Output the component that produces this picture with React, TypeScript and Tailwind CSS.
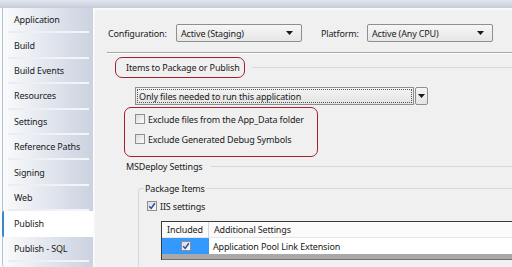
import React from "react"

// ─── Project properties: Package/Publish page ───

const font = { fontFamily: '"Noto Sans", "Open Sans", sans-serif' }

const tabs = [
  "Application",
  "Build",
  "Build Events",
  "Resources",
  "Settings",
  "Reference Paths",
  "Signing",
  "Web",
  "Publish",
  "Publish - SQL",
]

function Arrow() {
  return (
    <svg width="7" height="4" viewBox="0 0 7 4" className="shrink-0">
      <path d="M0 0 H7 L3.5 4 Z" fill="#1a1a1a" />
    </svg>
  )
}

function Check({ checked = false }: { checked?: boolean }) {
  return (
    <div className="w-[10px] h-[10px] shrink-0 border border-[#8f8f8f] bg-gradient-to-br from-[#dcdcdc] to-[#fbfbfb] flex items-center justify-center">
      {checked && (
        <svg width="8" height="8" viewBox="0 0 8 8">
          <path d="M1.2 4.2 L3.2 6.4 L6.8 1.2" fill="none" stroke="#2a4aa8" strokeWidth="1.5" />
        </svg>
      )}
    </div>
  )
}

function Select({ label, width }: { label: string; width: string }) {
  return (
    <div className={`${width} h-[18px] flex items-center justify-between pl-[4px] pr-[8px] border border-[#8e8f8f] rounded-[2px] bg-gradient-to-b from-[#f6f6f6] to-[#e6e6e6]`}>
      <span>{label}</span>
      <Arrow />
    </div>
  )
}

function SideBar() {
  return (
    <div className="w-[93px] shrink-0 pl-[2px] bg-gradient-to-r from-[#fbfcfd] to-[#cbd2e0]">
      <div className="h-full border-l border-[#b9bfcc] rounded-bl-[3px] flex flex-col">
        {tabs.map(t => {
          const active = t === "Publish"
          return (
            <div
              key={t}
              className={
                active
                  ? "h-[25.4px] shrink-0 flex items-center pl-[10px] bg-white border-l-2 border-[#3f86c7] rounded-l-[2px] -ml-px"
                  : "h-[25.4px] shrink-0 flex flex-col"
              }
            >
              {active ? (
                <span>{t}</span>
              ) : (
                <>
                  <div className="flex-1 flex items-center pl-[11px]">{t}</div>
                  <div className="h-[2px] ml-[5px] mr-[4px] bg-gradient-to-r from-[#e9ecf2] to-[#f4f6fa]" />
                </>
              )}
            </div>
          )
        })}
      </div>
    </div>
  )
}

function MainPanel() {
  return (
    <div className="flex-1 bg-[#f0f0f0] border-l-2 border-t-2 border-[#fafafa] flex flex-col overflow-hidden whitespace-nowrap">
      {/* configuration row */}
      <div className="flex items-center mt-[14px] ml-[13px] h-[18px]">
        <span className="w-[68px]">Configuration:</span>
        <Select label="Active (Staging)" width="w-[126px]" />
        <span className="ml-[19px] w-[46px]">Platform:</span>
        <Select label="Active (Any CPU)" width="w-[126px]" />
      </div>
      <div className="mt-[10px] ml-[12px] h-[2px] border-t border-[#a6a6a6] border-b border-b-white" />

      {/* items to package */}
      <div className="flex items-center mt-[3px] ml-[20px]">
        <div className="w-[130px] h-[21px] border-[1.5px] border-[#a31f34] rounded-[7px] flex items-center pl-[10px]">
          Items to Package or Publish
        </div>
        <div className="flex-1 ml-[7px] h-px bg-[#d0dae2]" />
      </div>

      <div className="flex mt-[9px] ml-[40px] h-[18px]">
        <div className="w-[279px] border border-[#8e8f8f] bg-gradient-to-b from-[#f4f4f4] to-[#e4e4e4] p-px">
          <div className="h-full border border-dotted border-[#555] flex items-center pl-[1px]">
            Only files needed to run this application
          </div>
        </div>
        <div className="w-[13px] ml-[1px] border border-[#8e8f8f] rounded-[2px] bg-gradient-to-b from-[#f4f4f4] to-[#e4e4e4] flex items-center justify-center">
          <Arrow />
        </div>
      </div>

      <div className="mt-[2px] ml-[29px] w-[194px] h-[50px] border-[1.5px] border-[#a31f34] rounded-[7px] flex flex-col gap-[6px] pt-[4px] pl-[10px]">
        <div className="h-[14px] flex items-center gap-[3px]">
          <Check />
          <span>Exclude files from the App_Data folder</span>
        </div>
        <div className="h-[14px] flex items-center gap-[3px]">
          <Check />
          <span>Exclude Generated Debug Symbols</span>
        </div>
      </div>

      {/* msdeploy */}
      <div className="flex items-center mt-[2px] ml-[31px] h-[14px]">
        <span>MSDeploy Settings</span>
        <div className="flex-1 ml-[8px] h-px bg-[#d0dae2]" />
      </div>

      <div className="mt-[15px] ml-[43px] flex-1 border-l border-t border-[#d0dae2] rounded-tl-[3px] flex flex-col">
        <div className="-mt-[8px] ml-[5px] px-px self-start bg-[#f0f0f0] h-[14px] flex items-center">Package Items</div>
        <div className="mt-[5px] ml-[8px] h-[12px] flex items-center gap-[3px]">
          <Check checked />
          <span>IIS settings</span>
        </div>
        <div className="mt-[9px] ml-[22px] border-l border-t border-[#3a3a3a] bg-white flex flex-col">
          <div className="h-[16px] flex bg-[#fbfbfb] border-b border-[#e6e6e6]">
            <div className="w-[47px] border-r border-[#d5d5d5] flex items-center justify-center">Included</div>
            <div className="flex items-center pl-[5px]">Additional Settings</div>
          </div>
          <div className="h-[16px] flex">
            <div className="w-[47px] bg-[#3399ff] flex items-center justify-center">
              <Check checked />
            </div>
            <div className="flex items-center pl-[4px]">Application Pool Link Extension</div>
          </div>
          <div className="h-[6px] bg-[#a9a9a9] border-b border-[#707070]" />
        </div>
      </div>
    </div>
  )
}

export default function App() {
  return (
    <div
      className="w-[512px] h-[267px] overflow-hidden flex flex-col text-[9px] leading-none tracking-[-0.15px] text-[#1b1b1b] bg-white"
      style={font}
    >
      <div className="h-[8px] shrink-0 bg-gradient-to-b from-[#e2e6ee] to-[#c6cedb]" />
      <div className="flex flex-1 min-h-0">
        <SideBar />
        <MainPanel />
      </div>
    </div>
  )
}
